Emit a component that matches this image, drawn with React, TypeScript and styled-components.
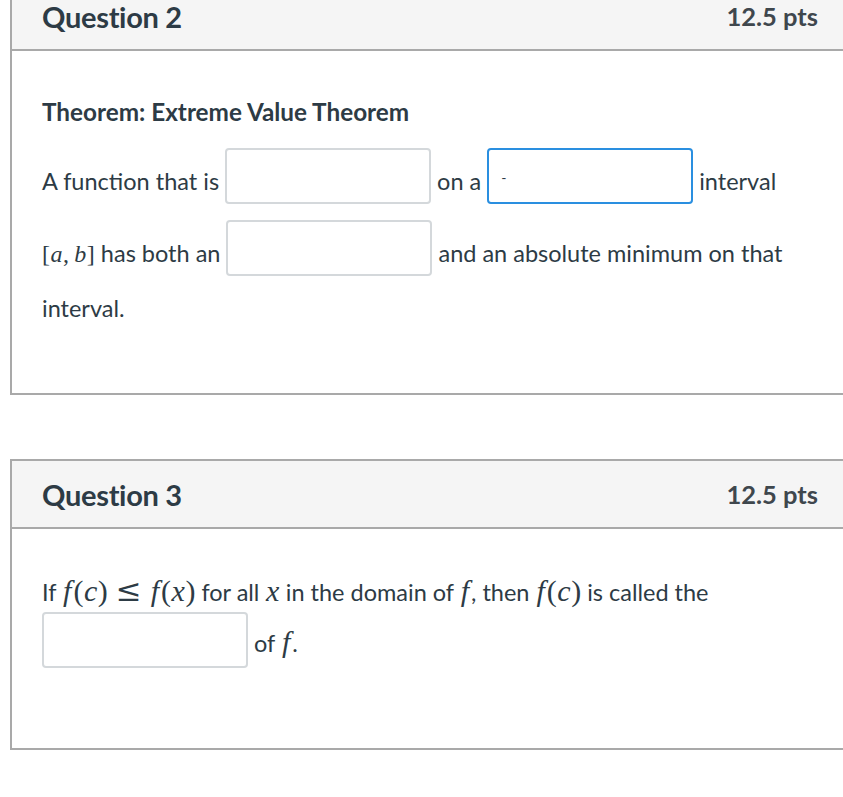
import React from "react";
import styled, { createGlobalStyle } from "styled-components";

const Global = createGlobalStyle`
  html, body { margin: 0; padding: 0; background: #fff; overflow: hidden; }
  body { font-family: Lato, "Open Sans", sans-serif; color: #2d3b45; }
`;

const Page = styled.div`
  display: flex;
  flex-direction: column;
  gap: 64px;
  margin-top: -19px;
  padding-left: 10px;
`;

const Card = styled.section`
  width: 840px;
  border: 2px solid #a9a9a9;
  border-right: none;
  background: #fff;
`;

const Header = styled.header`
  height: 66px;
  background: #f5f5f5;
  border-bottom: 2px solid #a9a9a9;
  display: flex;
  align-items: center;
  justify-content: space-between;
  padding: 0 34px 0 30px;
`;

const Title = styled.h2`
  margin: 0;
  font-size: 29px;
  font-weight: 700;
  color: #2d3b45;
  letter-spacing: -0.3px;
`;

const Points = styled.span`
  font-size: 25.5px;
  font-weight: 700;
  color: #3f474d;
`;

const Body = styled.div<{ $height: number; $top: number }>`
  height: ${(p) => p.$height}px;
  box-sizing: border-box;
  padding: ${(p) => p.$top}px 30px 0;
  width: 830px;
`;

const Heading = styled.p`
  margin: 0;
  font-size: 24.3px;
  font-weight: 700;
  line-height: 30px;
  color: #2d3b45;
`;

const Text = styled.p<{ $mt: number }>`
  margin: ${(p) => p.$mt}px 0 0;
  font-size: 23.5px;
  line-height: 32px;
  color: #2d3b45;
`;

const Blank = styled.input<{ $focused?: boolean; $top: number }>`
  display: inline-block;
  box-sizing: border-box;
  width: 206px;
  height: 56px;
  margin: ${(p) => p.$top}px 6px 16px;
  vertical-align: middle;
  border: ${(p) => (p.$focused ? "2px solid #2a8fe0" : "2px solid #d4d8db")};
  border-radius: 4px;
  background: #fff;
  outline: none;
  padding: 2px 0 0 12px;
  font-family: Lato, sans-serif;
  font-size: 14px;
  color: #2d3b45;
`;

const First = styled(Blank)`
  margin-left: 0;
`;

const MathExpr = styled.span`
  white-space: nowrap;
`;

const MathV = styled.i<{ $size?: number }>`
  font-family: "Liberation Serif", "Times New Roman", serif;
  font-style: italic;
  font-size: ${(p) => p.$size ?? 30}px;
  padding: 0 0.5px;
`;

const Fn = styled(MathV)`
  padding: 0 2px 0 1px;
`;

const MathU = styled.span<{ $size?: number }>`
  font-family: "Liberation Serif", "Times New Roman", serif;
  font-size: ${(p) => p.$size ?? 30}px;
`;

const Sym = styled.span`
  font-family: "DejaVu Serif", serif;
  font-size: 31px;
  line-height: 0;
  margin: 0 8px;
`;

function F({ arg }: { arg: string }) {
  return (
    <MathExpr>
      <Fn>f</Fn>
      <MathU>(</MathU>
      <MathV>{arg}</MathV>
      <MathU>)</MathU>
    </MathExpr>
  );
}

export default function App() {
  return (
    <>
      <Global />
      <Page>
        <Card>
          <Header>
            <Title>Question 2</Title>
            <Points>12.5 pts</Points>
          </Header>
          <Body $height={342} $top={46}>
            <Heading>Theorem: Extreme Value Theorem</Heading>
            <Text $mt={21}>
              A function that is<Blank $top={0} readOnly value="" />on a
              <Blank $top={0} $focused readOnly value="-" />interval{" "}
              <MathExpr>
                <MathU $size={24}>[</MathU>
                <MathV $size={24}>a</MathV>
                <MathU $size={24}>,{"\u2009"}</MathU>
                <MathV $size={24}>b</MathV>
                <MathU $size={24}>]</MathU>
              </MathExpr>{" "}
              has both an
              <Blank $top={0} readOnly value="" />
              and an absolute minimum on that interval.
            </Text>
          </Body>
        </Card>
        <Card>
          <Header>
            <Title>Question 3</Title>
            <Points>12.5 pts</Points>
          </Header>
          <Body $height={219} $top={46}>
            <Text $mt={0}>
              If <F arg="c" />
              <Sym>≤</Sym>
              <F arg="x" /> for all <MathV>x</MathV> in the domain of{" "}
              <Fn>f</Fn>, then <F arg="c" /> is called the{" "}
              <First $top={4} readOnly value="" />
              of <Fn>f</Fn>.
            </Text>
          </Body>
        </Card>
      </Page>
    </>
  );
}
